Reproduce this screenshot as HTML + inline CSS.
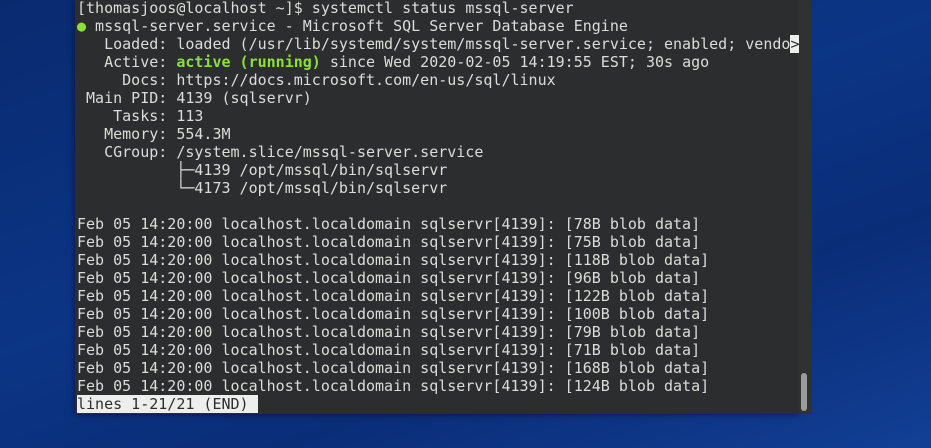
<!DOCTYPE html>
<html><head><style>
body{margin:0;width:931px;height:448px;overflow:hidden;background:linear-gradient(160deg,#0a2a70 0%,#0b3585 45%,#0a2d78 70%,#123f95 100%);position:relative}
.t{position:absolute;left:75px;top:0;width:723px;height:414px;background:#2b2d2e;box-shadow:0 0 6px rgba(0,0,0,.6)}
.sb{position:absolute;left:798px;top:0;width:14px;height:414px;background:#2f3132}
.th{position:absolute;left:801px;top:373px;width:6px;height:38px;background:#9a9c9a;border-radius:3px}
pre{margin:0;position:absolute;left:77px;top:-1px;font:15px/18px "DejaVu Sans Mono","Liberation Mono",monospace;color:#dcdcd8;white-space:pre}
.g{color:#8ae234;font-weight:bold}
.d{color:#8ae234}
.inv{background:#eeeeec;color:#2b2d2e}
</style></head><body>
<div class="t"></div><div class="sb"></div><div class="th"></div>
<pre>[thomasjoos@localhost ~]$ systemctl status mssql-server
<span class="d">●</span> mssql-server.service - Microsoft SQL Server Database Engine
   Loaded: loaded (/usr/lib/systemd/system/mssql-server.service; enabled; vendo<span class="inv">&gt;</span>
   Active: <span class="g">active (running)</span> since Wed 2020-02-05 14:19:55 EST; 30s ago
     Docs: https://docs.microsoft.com/en-us/sql/linux
 Main PID: 4139 (sqlservr)
    Tasks: 113
   Memory: 554.3M
   CGroup: /system.slice/mssql-server.service
           ├─4139 /opt/mssql/bin/sqlservr
           └─4173 /opt/mssql/bin/sqlservr

Feb 05 14:20:00 localhost.localdomain sqlservr[4139]: [78B blob data]
Feb 05 14:20:00 localhost.localdomain sqlservr[4139]: [75B blob data]
Feb 05 14:20:00 localhost.localdomain sqlservr[4139]: [118B blob data]
Feb 05 14:20:00 localhost.localdomain sqlservr[4139]: [96B blob data]
Feb 05 14:20:00 localhost.localdomain sqlservr[4139]: [122B blob data]
Feb 05 14:20:00 localhost.localdomain sqlservr[4139]: [100B blob data]
Feb 05 14:20:00 localhost.localdomain sqlservr[4139]: [79B blob data]
Feb 05 14:20:00 localhost.localdomain sqlservr[4139]: [71B blob data]
Feb 05 14:20:00 localhost.localdomain sqlservr[4139]: [168B blob data]
Feb 05 14:20:00 localhost.localdomain sqlservr[4139]: [124B blob data]
<span class="inv">lines 1-21/21 (END) </span></pre>
</body></html>
